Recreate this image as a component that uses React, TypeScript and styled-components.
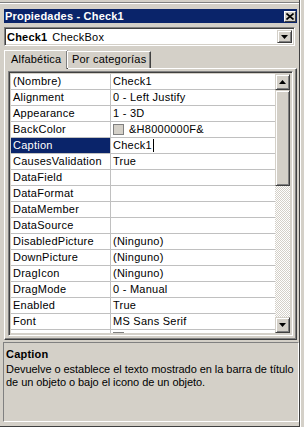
import React from "react";
import styled, { createGlobalStyle } from "styled-components";

const Global = createGlobalStyle`
  html, body { margin: 0; padding: 0; background: #d4d0c8; overflow: hidden; }
  body { font-family: Tahoma, "Liberation Sans", Arial, sans-serif; font-size: 11px; color: #000; }
`;

const Frame = styled.div`
  width: 304px;
  height: 427px;
  background: #d4d0c8;
  box-sizing: border-box;
  display: flex;
`;

const Panel = styled.div`
  width: 300px;
  height: 427px;
  box-sizing: border-box;
  border-right: 1px solid #404040;
  border-bottom: 1px solid #404040;
  display: flex;
  flex-direction: column;
`;

const Side = styled.div`
  flex: 1;
  border-left: 1px solid #fff;
`;

const TopStrip = styled.div`
  height: 9px;
  box-sizing: border-box;
  border-top: 2px solid #d4d0c8;
  & > div { height: 1px; background: #808080; border-bottom: 1px solid #fff; }
`;

const TitleBar = styled.div`
  margin: 0 2px 0 4px;
  height: 14px;
  background: #0a246a;
  color: #fff;
  display: flex;
  align-items: center;
  justify-content: space-between;
  padding-left: 1px;
`;

const Title = styled.span`
  font-weight: bold;
  font-size: 11px;
  letter-spacing: 0.2px;
`;

const CloseBtn = styled.div`
  width: 12px;
  height: 11px;
  margin-right: 1px;
  box-sizing: border-box;
  background: #d4d0c8;
  border-top: 1px solid #fff;
  border-left: 1px solid #fff;
  border-right: 1px solid #404040;
  border-bottom: 1px solid #404040;
  display: flex;
  align-items: center;
  justify-content: center;
`;

const Combo = styled.div`
  margin: 4px 4px 0 4px;
  height: 19px;
  box-sizing: border-box;
  background: #fff;
  border-top: 1px solid #808080;
  border-left: 1px solid #808080;
  border-right: 1px solid #fff;
  border-bottom: 1px solid #fff;
  box-shadow: inset 1px 1px 0 #404040, inset -1px -1px 0 #d4d0c8;
  display: flex;
  align-items: center;
  padding-left: 2px;
  gap: 5px;
  letter-spacing: 0.2px;
`;

const Bold = styled.span`
  font-weight: bold;
`;

const Spacer = styled.span`
  flex: 1;
`;

const ArrowBtn = styled.div<{ $h?: number }>`
  width: 15px;
  height: ${(p) => p.$h ?? 13}px;
  box-sizing: border-box;
  background: #d4d0c8;
  border-top: 1px solid #d4d0c8;
  border-left: 1px solid #d4d0c8;
  border-right: 1px solid #404040;
  border-bottom: 1px solid #404040;
  box-shadow: inset 1px 1px 0 #fff, inset -1px -1px 0 #808080;
  display: flex;
  align-items: center;
  justify-content: center;
  flex-shrink: 0;
`;

const ComboBtn = styled(ArrowBtn)`
  margin-right: 2px;
`;

const Tabs = styled.div`
  display: flex;
  align-items: flex-end;
  margin: 3px 0 0 4px;
  height: 19px;
  position: relative;
  z-index: 1;
  letter-spacing: 0.2px;
`;

const Tab = styled.div<{ $active?: boolean }>`
  box-sizing: border-box;
  height: ${(p) => (p.$active ? 19 : 17)}px;
  padding: ${(p) => (p.$active ? "2px 6px 0 6px" : "1px 4px 0 4px")};
  margin-left: ${(p) => (p.$active ? "0" : "-1px")};
  border-top: 1px solid #fff;
  border-left: 1px solid #fff;
  border-right: 1px solid #404040;
  box-shadow: inset -1px 0 0 #808080;
  background: #d4d0c8;
  ${(p) => (p.$active ? "margin-bottom: -1px; width: 64px;" : "")}
`;

const TabPanel = styled.div`
  margin: 0 2px 0 4px;
  height: 272px;
  box-sizing: border-box;
  border-top: 1px solid #fff;
  border-left: 1px solid #fff;
  border-right: 1px solid #404040;
  border-bottom: 1px solid #404040;
  box-shadow: inset -1px -1px 0 #808080;
  padding: 2px 3px 3px 3px;
  display: flex;
`;

const GridBox = styled.div`
  flex: 1;
  box-sizing: border-box;
  border-top: 1px solid #808080;
  border-left: 1px solid #808080;
  border-right: 1px solid #fff;
  border-bottom: 1px solid #fff;
  box-shadow: inset 1px 1px 0 #404040, inset -1px -1px 0 #d4d0c8;
  padding: 2px;
  display: flex;
`;

const Rows = styled.div`
  flex: 1;
  background: #fff;
  overflow: hidden;
  letter-spacing: 0.25px;
`;

const Row = styled.div`
  display: grid;
  grid-template-columns: 100px 1fr;
  height: 16px;
  box-sizing: border-box;
  border-bottom: 1px solid #c0c0c0;
`;

const NameCell = styled.div<{ $sel?: boolean }>`
  padding-left: 2px;
  line-height: 15px;
  white-space: nowrap;
  overflow: hidden;
  border-right: 1px solid #c0c0c0;
  background: ${(p) => (p.$sel ? "#0a246a" : "#fff")};
  color: ${(p) => (p.$sel ? "#fff" : "#000")};
`;

const ValueCell = styled.div`
  padding-left: 2px;
  line-height: 15px;
  white-space: nowrap;
  overflow: hidden;
  display: flex;
  align-items: center;
  gap: 5px;
`;

const Swatch = styled.span<{ $c: string }>`
  width: 11px;
  height: 11px;
  box-sizing: border-box;
  border: 1px solid #808080;
  background: ${(p) => p.$c};
  flex-shrink: 0;
`;

const Caret = styled.span`
  display: inline-block;
  width: 1px;
  height: 13px;
  background: #000;
  margin-left: -4px;
`;

const ScrollBar = styled.div`
  width: 15px;
  display: flex;
  flex-direction: column;
  background-color: #ece9e4;
  background-image: repeating-conic-gradient(#d4d0c8 0 25%, #fff 0 50%);
  background-size: 2px 2px;
`;

const Thumb = styled.div`
  height: 96px;
  box-sizing: border-box;
  background: #d4d0c8;
  border-top: 1px solid #d4d0c8;
  border-left: 1px solid #d4d0c8;
  border-right: 1px solid #404040;
  border-bottom: 1px solid #404040;
  box-shadow: inset 1px 1px 0 #fff, inset -1px -1px 0 #808080;
`;

const Track = styled.div`
  flex: 1;
`;

const Desc = styled.div`
  margin: 2px 0 0 3px;
  height: 80px;
  box-sizing: border-box;
  border-top: 1px solid #808080;
  border-left: 1px solid #808080;
  border-right: 1px solid #fff;
  border-bottom: 1px solid #fff;
  padding: 5px 2px 4px 2px;
`;

const DescTitle = styled.div`
  font-weight: bold;
  margin-bottom: 3px;
  letter-spacing: 0.2px;
`;

const DescText = styled.div`
  line-height: 13px;
  letter-spacing: -0.05px;
`;

const Triangle = ({ up }: { up?: boolean }) => (
  <svg width="7" height="4" viewBox="0 0 7 4">
    <path d={up ? "M3.5 0 L7 4 L0 4 Z" : "M0 0 L7 0 L3.5 4 Z"} fill="#000" />
  </svg>
);

type Prop = { n: string; v?: string; swatch?: string; sel?: boolean };

const props: Prop[] = [
  { n: "(Nombre)", v: "Check1" },
  { n: "Alignment", v: "0 - Left Justify" },
  { n: "Appearance", v: "1 - 3D" },
  { n: "BackColor", v: "&H8000000F&", swatch: "#d4d0c8" },
  { n: "Caption", v: "Check1", sel: true },
  { n: "CausesValidation", v: "True" },
  { n: "DataField" },
  { n: "DataFormat" },
  { n: "DataMember" },
  { n: "DataSource" },
  { n: "DisabledPicture", v: "(Ninguno)" },
  { n: "DownPicture", v: "(Ninguno)" },
  { n: "DragIcon", v: "(Ninguno)" },
  { n: "DragMode", v: "0 - Manual" },
  { n: "Enabled", v: "True" },
  { n: "Font", v: "MS Sans Serif" },
  { n: "", swatch: "#000" },
];

export default function App() {
  return (
    <Frame>
      <Global />
      <Panel>
        <TopStrip>
          <div />
        </TopStrip>
        <TitleBar>
          <Title>Propiedades - Check1</Title>
          <CloseBtn>
            <svg width="8" height="7" viewBox="0 0 8 7">
              <path d="M0.5 0.5 L7.5 6.5 M7.5 0.5 L0.5 6.5" stroke="#000" strokeWidth="1.6" />
            </svg>
          </CloseBtn>
        </TitleBar>
        <Combo>
          <Bold>Check1</Bold>
          <span>CheckBox</span>
          <Spacer />
          <ComboBtn $h={13}>
            <Triangle />
          </ComboBtn>
        </Combo>
        <Tabs>
          <Tab $active>Alfabética</Tab>
          <Tab>Por categorías</Tab>
        </Tabs>
        <TabPanel>
          <GridBox>
            <Rows>
              {props.map((p, i) => (
                <Row key={i}>
                  <NameCell $sel={p.sel}>{p.n}</NameCell>
                  <ValueCell>
                    {p.swatch && <Swatch $c={p.swatch} />}
                    {p.v}
                    {p.sel && <Caret />}
                  </ValueCell>
                </Row>
              ))}
            </Rows>
            <ScrollBar>
              <ArrowBtn $h={16}>
                <Triangle up />
              </ArrowBtn>
              <Thumb />
              <Track />
              <ArrowBtn $h={16}>
                <Triangle />
              </ArrowBtn>
            </ScrollBar>
          </GridBox>
        </TabPanel>
        <Desc>
          <DescTitle>Caption</DescTitle>
          <DescText>
            Devuelve o establece el texto mostrado en la barra de título de un objeto o bajo el icono de un objeto.
          </DescText>
        </Desc>
      </Panel>
      <Side />
    </Frame>
  );
}
